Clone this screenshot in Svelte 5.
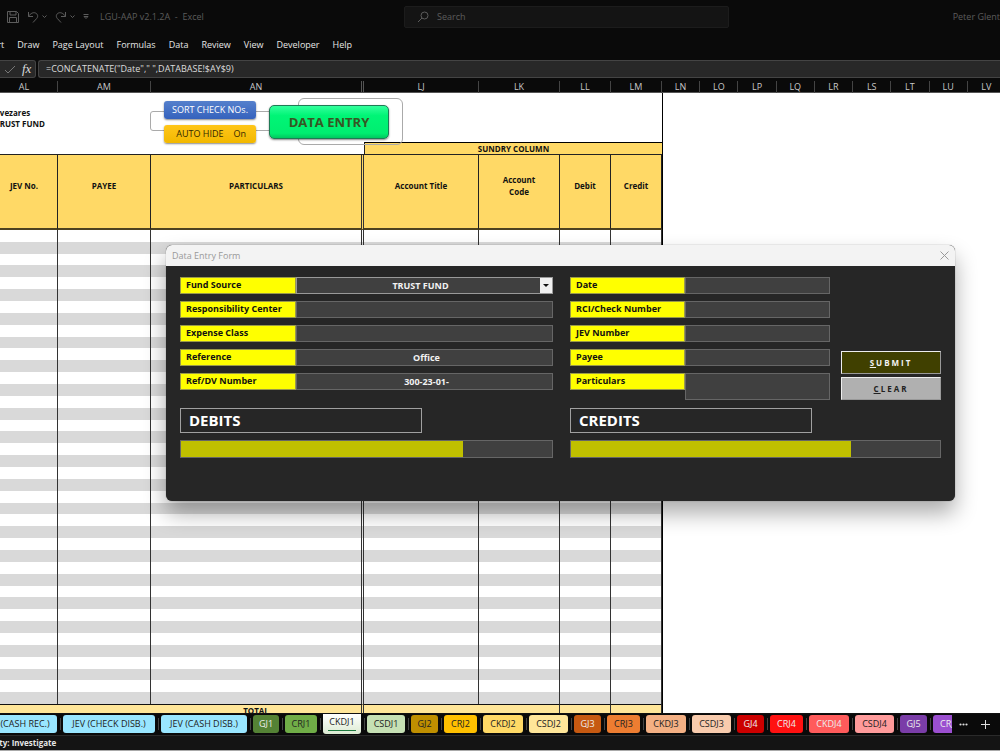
<script>
    const menus = ['Insert', 'Draw', 'Page Layout', 'Formulas', 'Data', 'Review', 'View', 'Developer', 'Help'];
    const columns = ['AL', 'AM', 'AN', 'LJ', 'LK', 'LL', 'LM', 'LN', 'LO', 'LP', 'LQ', 'LR', 'LS', 'LT', 'LU', 'LV'];
    const rows = Array.from({ length: 40 }, (_, i) => i);

    const sheets = [
        { name: 'JEV (CASH REC.)', kind: 'rec', color: 'sky' },
        { name: 'JEV (CHECK DISB.)', kind: 'check', color: 'sky' },
        { name: 'JEV (CASH DISB.)', kind: 'cash', color: 'sky' },
        { name: 'GJ1', kind: 'gj1', color: 'green-a' },
        { name: 'CRJ1', kind: 'crj1', color: 'green-b' },
        { name: 'CKDJ1', kind: 'ckdj1', color: 'current' },
        { name: 'CSDJ1', kind: 'csdj1', color: 'green-d' },
        { name: 'GJ2', kind: 'gj', color: 'gold-a' },
        { name: 'CRJ2', kind: 'crj', color: 'gold-b' },
        { name: 'CKDJ2', kind: 'ckdj', color: 'gold-c' },
        { name: 'CSDJ2', kind: 'csdj', color: 'gold-d' },
        { name: 'GJ3', kind: 'gj', color: 'orange-a' },
        { name: 'CRJ3', kind: 'crj', color: 'orange-b' },
        { name: 'CKDJ3', kind: 'ckdj', color: 'orange-c' },
        { name: 'CSDJ3', kind: 'csdj', color: 'orange-d' },
        { name: 'GJ4', kind: 'gj', color: 'red-a' },
        { name: 'CRJ4', kind: 'crj', color: 'red-b' },
        { name: 'CKDJ4', kind: 'ckdj', color: 'red-c' },
        { name: 'CSDJ4', kind: 'csdj', color: 'red-d' },
        { name: 'GJ5', kind: 'gj', color: 'purple-a' },
        { name: 'CRJ5', kind: 'crj', color: 'purple-b' }
    ];

    const funds = ['TRUST FUND', 'GENERAL FUND'];
    const totals = [{ title: 'DEBITS', filled: 76 }, { title: 'CREDITS', filled: 76 }];

    let formula = '=CONCATENATE("Date"," ",DATABASE!$AY$9)';
    let search = '';
    let showForm = true;
    let autoHide = true;

    let fund = funds[0];
    let left = [
        { id: 'center', label: 'Responsibility Center', value: '' },
        { id: 'expense', label: 'Expense Class', value: '' },
        { id: 'reference', label: 'Reference', value: 'Office' },
        { id: 'refdv', label: 'Ref/DV Number', value: '300-23-01-' }
    ];
    let right = [
        { id: 'date', label: 'Date', value: '' },
        { id: 'rci', label: 'RCI/Check Number', value: '' },
        { id: 'jev', label: 'JEV Number', value: '' },
        { id: 'payee', label: 'Payee', value: '' }
    ];
    let particulars = '';

    function clearForm() {
        left = left.map((f) => ({ ...f, value: '' }));
        right = right.map((f) => ({ ...f, value: '' }));
        particulars = '';
    }
</script>

<div class="app">
    <header class="titlebar">
        <div class="quick">
            <button aria-label="Save">
                <svg width="12" height="12" viewBox="0 0 12 12"><path d="M.5.5h9l2 2v9H.5zM3 .5V4h6V.5M2.5 11.5v-5h7v5" /></svg>
            </button>
            <button aria-label="Undo">
                <svg width="20" height="12" viewBox="0 0 20 12"><path d="M1.500 1v4.500H6M1.500 5.500C3.500 2 7 .8 9.200 2.400c2.400 1.800 1.500 4.200 0 5.600L6 11.500M15.500 4.500l2 2 2-2" /></svg>
            </button>
            <button aria-label="Redo">
                <svg width="20" height="12" viewBox="0 0 20 12"><path d="M10.500 1v4.500H6M10.500 5.500C8.500 2 5 .8 2.800 2.400.4 4.200 1.300 6.600 2.800 8L6 11.500M15.500 4.500l2 2 2-2" /></svg>
            </button>
            <button aria-label="Customize toolbar">
                <svg width="6" height="6" viewBox="0 0 6 6"><path d="M.5.5h5M1 2.500h4l-2 2z" /></svg>
            </button>
        </div>
        <span class="filename">LGU-AAP v2.1.2A&nbsp; -&nbsp; Excel</span>
        <label class="search">
            <svg width="12" height="12" viewBox="0 0 12 12"><circle cx="7.500" cy="4.500" r="3.500" /><path d="M5 7L1 11" /></svg>
            <input aria-label="Search" placeholder="Search" bind:value={search} />
        </label>
        <span class="user">Peter Glent</span>
    </header>

    <nav class="ribbon">
        {#each menus as menu}
            <button>{menu}</button>
        {/each}
    </nav>

    <div class="formula">
        <div class="fx">
            <svg width="12" height="9" viewBox="0 0 12 9"><path d="M1 5l3 3 7-7" /></svg>
            <i>fx</i>
        </div>
        <input aria-label="Formula" bind:value={formula} />
    </div>

    <div class="letters">
        {#each columns as column}
            <span>{column}</span>
        {/each}
    </div>

    <main class="sheet">
        <table>
            <colgroup>
                <col class="c-jev" /><col class="c-payee" /><col class="c-part" /><col class="c-title" /><col class="c-code" /><col class="c-amt" /><col class="c-amt" />
            </colgroup>
            <thead>
                <tr class="top"><td colspan="7"><p>avezares<br />TRUST FUND</p></td></tr>
                <tr class="group"><td colspan="3"></td><th colspan="4">SUNDRY COLUMN</th></tr>
                <tr class="heads">
                    <th>JEV No.</th>
                    <th>PAYEE</th>
                    <th>PARTICULARS</th>
                    <th>Account Title</th>
                    <th>Account<br />Code</th>
                    <th>Debit</th>
                    <th>Credit</th>
                </tr>
            </thead>
            <tbody>
                {#each rows as row (row)}
                    <tr><td></td><td></td><td></td><td></td><td></td><td></td><td></td></tr>
                {/each}
            </tbody>
            <tfoot>
                <tr><td></td><td></td><td>TOTAL</td><td></td><td></td><td></td><td></td></tr>
            </tfoot>
        </table>

        <div class="link small"></div>
        <div class="link big"></div>
        <button class="shape sort">SORT CHECK NOs.</button>
        <button class="shape hide" on:click={() => (autoHide = !autoHide)}>AUTO HIDE <span>{autoHide ? 'On' : 'Off'}</span></button>
        <button class="shape entry" on:click={() => (showForm = true)}>DATA ENTRY</button>

        {#if showForm}
            <div class="dialog" role="dialog" aria-label="Data Entry Form">
                <div class="caption">
                    <span>Data Entry Form</span>
                    <button aria-label="Close" on:click={() => (showForm = false)}>
                        <svg width="9" height="9" viewBox="0 0 9 9"><path d="M.5.5l8 8M8.500.5l-8 8" /></svg>
                    </button>
                </div>
                <form on:submit|preventDefault>
                    <div class="fields first">
                        <div class="field">
                            <label for="fund">Fund Source</label>
                            <div class="combo">
                                <select id="fund" bind:value={fund}>
                                    {#each funds as name}
                                        <option>{name}</option>
                                    {/each}
                                </select>
                                <span class="arrow"></span>
                            </div>
                        </div>
                        {#each left as item (item.id)}
                            <div class="field">
                                <label for={item.id}>{item.label}</label>
                                <input id={item.id} bind:value={item.value} />
                            </div>
                        {/each}
                    </div>
                    <div class="fields second">
                        {#each right as item (item.id)}
                            <div class="field">
                                <label for={item.id}>{item.label}</label>
                                <input id={item.id} bind:value={item.value} />
                            </div>
                        {/each}
                        <div class="field">
                            <label for="particulars">Particulars</label>
                            <textarea id="particulars" bind:value={particulars}></textarea>
                        </div>
                    </div>
                    <div class="actions">
                        <button class="submit" type="submit"><u>S</u>UBMIT</button>
                        <button class="clear" type="button" on:click={clearForm}><u>C</u>LEAR</button>
                    </div>
                </form>
                <div class="totals">
                    {#each totals as total}
                        <section>
                            <h2>{total.title}</h2>
                            <div class="bar"><div style="width: {total.filled}%"></div></div>
                        </section>
                    {/each}
                </div>
            </div>
        {/if}
    </main>

    <nav class="tabs">
        <div class="strip">
            {#each sheets as sheet}
                <button class="tab {sheet.kind} {sheet.color}"><span>{sheet.name}</span></button>
            {/each}
        </div>
        <button class="more" aria-label="More sheets">
            <svg width="9" height="3" viewBox="0 0 9 3"><circle cx="1.500" cy="1.500" r="1.100" /><circle cx="4.500" cy="1.500" r="1.100" /><circle cx="7.500" cy="1.500" r="1.100" /></svg>
        </button>
        <button class="add" aria-label="New sheet">
            <svg width="9" height="9" viewBox="0 0 9 9"><path d="M4.500 0v9M0 4.500h9" /></svg>
        </button>
    </nav>
    <footer>Accessibility: Investigate</footer>
</div>

<style>
    :global(body) {
        background: #0a0a0a;
    }
    .app {
        height: 100vh;
        display: flex;
        flex-direction: column;
        overflow: hidden;
        background: #0a0a0a;
        color: #e6e6e6;
        font: 9px/12px "Open Sans", "Noto Sans", sans-serif;
    }
    .app :global(*) {
        box-sizing: border-box;
    }
    button, input, select, textarea {
        margin: 0;
        padding: 0;
        border: 0;
        border-radius: 0;
        outline: 0;
        background: none;
        color: inherit;
        font: inherit;
    }
    svg {
        display: block;
        fill: none;
        stroke: currentColor;
    }

    /* title bar */
    .titlebar {
        display: grid;
        grid-template-columns: 404px 325px 1fr;
        grid-template-rows: 34px;
        align-items: center;
        flex: none;
        color: #5c5c5c;
    }
    .quick {
        grid-area: 1 / 1;
        display: flex;
        align-items: center;
        gap: 8px;
        padding-left: 7px;
    }
    .filename {
        grid-area: 1 / 1;
        padding-left: 100px;
    }
    .search {
        display: flex;
        align-items: center;
        gap: 8px;
        height: 22px;
        padding-left: 12px;
        border: 1px solid #1c1c1c;
        border-radius: 2px;
        background: #141414;
    }
    .search input {
        flex: 1;
    }
    .search input::placeholder {
        color: #5c5c5c;
    }
    .user {
        justify-self: end;
        white-space: nowrap;
    }

    .ribbon {
        display: flex;
        flex: none;
        gap: 13px;
        height: 26px;
        padding-bottom: 5px;
        margin-left: -20px;
    }

    .formula {
        display: flex;
        flex: none;
        gap: 2px;
        height: 18px;
        color: #dcdcdc;
    }
    .fx {
        display: flex;
        align-items: center;
        gap: 6px;
        width: 36px;
        padding-left: 4px;
        border: 1px solid #444;
        border-left: 0;
        border-radius: 0 3px 3px 0;
        background: #282828;
    }
    .fx svg {
        color: #777;
    }
    .fx i {
        font: italic 13px/14px "Liberation Serif", serif;
    }
    .formula input {
        flex: 1;
        padding-left: 7px;
        border: 1px solid #444;
        border-right: 0;
        border-radius: 3px 0 0 3px;
        background: #282828;
    }

    .letters {
        display: grid;
        grid-template-columns: 58px 93px 213px 115px 81px 51px 51px repeat(9, 1fr);
        flex: none;
        height: 15px;
        padding-top: 3px;
        margin-right: -6px;
        border-bottom: 1px solid #555;
        color: #c8c8c8;
        text-align: center;
    }
    .letters span {
        border-right: 1px solid #444;
    }
    .letters span:first-child {
        padding-right: 9px;
    }
    .letters span:nth-child(3) {
        border-right: 3px double #555;
    }

    /* worksheet */
    .sheet {
        position: relative;
        flex: 1;
        min-height: 0;
        overflow: hidden;
        background: #fff;
        color: #111;
    }
    table {
        width: 662px;
        table-layout: fixed;
        border-collapse: separate;
        border-spacing: 0;
        border-right: 1px solid #000;
    }
    .c-jev { width: 58px; }
    .c-payee { width: 93px; }
    .c-part { width: 213px; }
    .c-title { width: 115px; }
    .c-code { width: 81px; }
    .c-amt { width: 51px; }
    td, th {
        padding: 0;
        line-height: 12px;
    }
    .top td {
        height: 49px;
        vertical-align: top;
    }
    .top p {
        margin: 14px 0 0 -5px;
        line-height: 11px;
        font-size: 8px;
        font-weight: 700;
    }
    .group th, .group td {
        height: 13px;
        line-height: 10px;
        border-bottom: 1px solid #222;
    }
    .group th {
        border-top: 1px solid #000;
        border-left: 1px solid #222;
        background: #ffd966;
    }
    .heads th {
        height: 75px;
        padding-bottom: 12px;
        border-right: 1px solid #222;
        border-bottom: 2px solid #4d4220;
        background: #ffd966;
    }
    .heads th:first-child {
        padding-right: 9px;
    }
    .group th, .heads th, tfoot td {
        font-size: 8px;
        font-weight: 700;
    }
    tbody td {
        height: 12px;
        border-right: 1px solid #333;
    }
    tbody tr:nth-child(7n + 3) td {
        height: 11px;
    }
    tbody tr:nth-child(even) td {
        background: #d9d9d9;
    }
    .heads th:nth-child(3), tbody td:nth-child(3), tfoot td:nth-child(3) {
        border-right: 3px double #333;
    }
    tfoot td {
        height: 14px;
        border-top: 1px solid #111;
        background: #ffe699;
        text-align: center;
        vertical-align: top;
    }
    tfoot td:nth-child(n + 5) {
        border-right: 1px solid #333;
    }

    /* drawing shapes floating on the sheet */
    .link, .shape {
        position: absolute;
    }
    .link {
        border: 1px solid #aaa;
    }
    .link.small {
        left: 150px;
        top: 18px;
        width: 130px;
        height: 20px;
        border-radius: 3px;
    }
    .link.big {
        left: 298px;
        top: 5px;
        width: 105px;
        height: 47px;
        border-radius: 6px;
    }
    .shape {
        border-radius: 3px;
        box-shadow: 0 1px 2px #0007;
    }
    .sort, .hide {
        left: 164px;
        width: 92px;
        height: 18px;
    }
    .sort {
        top: 8px;
        background: linear-gradient(#5580cc, #3562bd);
        color: #fff;
    }
    .hide {
        display: flex;
        align-items: center;
        justify-content: flex-end;
        gap: 10px;
        top: 32px;
        padding-right: 10px;
        background: linear-gradient(#ffc61a, #f2b800);
        color: #332800;
    }
    .entry {
        left: 269px;
        top: 12px;
        width: 120px;
        height: 34px;
        border: 1px solid #1f7a55;
        border-radius: 5px;
        background: linear-gradient(#33ff9c, #00f576 30%, #00ee70 85%, #00c95f);
        color: #375623;
        font-size: 13px;
        font-weight: 700;
    }

    /* data entry window */
    .dialog {
        position: absolute;
        left: 166px;
        top: 152px;
        width: 789px;
        height: 256px;
        overflow: hidden;
        border-radius: 6px;
        background: #262626;
        box-shadow: 0 0 1px #0009, 0 12px 22px #0005;
        color: #f2f2f2;
        font-weight: 700;
    }
    .caption {
        display: flex;
        align-items: center;
        justify-content: space-between;
        height: 21px;
        padding: 0 6px;
        background: #f3f3f3;
        color: #999;
        font-weight: 400;
    }
    form {
        display: flex;
        padding: 11px 14px 0;
    }
    .fields {
        display: flex;
        flex-direction: column;
        gap: 7px;
    }
    .first {
        width: 373px;
        margin-right: 17px;
    }
    .second {
        width: 260px;
        margin-right: 11px;
    }
    .field {
        display: flex;
        align-items: flex-start;
    }
    .field label {
        flex: none;
        width: 116px;
        height: 17px;
        padding-left: 5px;
        border: 1px solid #9a9a4a;
        background: #ff0;
        color: #111;
        line-height: 14px;
    }
    .second label {
        width: 115px;
    }
    .field input, .field textarea, .combo {
        flex: 1;
        min-width: 0;
        height: 17px;
        padding-left: 4px;
        border: 1px solid #666;
        background: #404040;
        text-align: center;
    }
    .field textarea {
        display: block;
        height: 27px;
        resize: none;
    }
    .combo {
        display: flex;
        border-color: #999;
    }
    .combo select {
        flex: 1;
        appearance: none;
        text-align: center;
        text-align-last: center;
        line-height: 14px;
    }
    .arrow {
        display: flex;
        align-items: center;
        justify-content: center;
        width: 12px;
        background: #f0f0f0;
        pointer-events: none;
    }
    .arrow::after {
        content: "";
        border: 3px solid transparent;
        border-top-color: #111;
        border-bottom: 0;
    }
    .actions {
        display: flex;
        flex-direction: column;
        justify-content: flex-end;
        gap: 3px;
        flex: 1;
    }
    .actions button {
        height: 23px;
        border: 1px solid #999;
        border-top-color: #eee;
        border-left-color: #eee;
        letter-spacing: 2px;
        font-size: 8px;
        font-weight: 700;
    }
    .submit {
        background: #404000;
    }
    .clear {
        background: #b0b0b0;
        color: #222;
    }
    .totals {
        display: grid;
        grid-template-columns: 373px 1fr;
        gap: 17px;
        padding: 8px 14px 0;
    }
    h2 {
        width: 242px;
        height: 25px;
        margin: 0 0 7px;
        padding-left: 8px;
        border: 1px solid #a0a0a0;
        color: #fff;
        font-size: 15px;
        line-height: 22px;
    }
    .bar {
        height: 18px;
        border: 1px solid #666;
        background: #404040;
    }
    .bar div {
        height: 100%;
        background: #c0c000;
    }

    /* sheet tabs */
    .tabs {
        display: flex;
        flex: none;
        align-items: center;
        height: 22px;
        padding-right: 4px;
        border-top: 1px solid #111;
        background: #0a0a0a;
    }
    .strip {
        display: flex;
        align-items: center;
        width: calc(100% - 44px);
        height: 100%;
        overflow: hidden;
    }
    .tab {
        display: flex;
        flex: none;
        align-items: center;
        justify-content: center;
        height: 22px;
        padding: 1px 0 2px;
        color: #222;
        white-space: nowrap;
    }
    .tab::after {
        content: "";
        flex: none;
        width: 1px;
        height: 12px;
        margin: 0 2px 0 3px;
        background: #444;
    }
    .tab span {
        flex: 1;
        height: 18px;
        line-height: 17px;
        border-radius: 3px;
    }
    .rec { width: 85px; margin-left: -22px; }
    .check { width: 98px; }
    .cash { width: 92px; }
    .gj1 { width: 32px; }
    .crj1 { width: 38px; }
    .ckdj1 { width: 44px; }
    .csdj1 { width: 44px; }
    .gj { width: 33px; }
    .crj { width: 39px; }
    .ckdj { width: 46px; }
    .csdj { width: 45px; }
    .sky span { background: #99e6ff; }
    .green-a span { background: #548235; color: #eee; }
    .green-b span { background: #70ad47; }
    .green-d span { background: #c6e0b4; }
    .gold-a span { background: #bf8f00; }
    .gold-b span { background: #ffc000; }
    .gold-c span { background: #ffd966; }
    .gold-d span { background: #ffe699; }
    .orange-a span { background: #c65911; color: #eee; }
    .orange-b span { background: #ed7d31; }
    .orange-c span { background: #f4b084; }
    .orange-d span { background: #f8cbad; }
    .red-a span { background: #c00; color: #eee; }
    .red-b span { background: #f11; color: #eee; }
    .red-c span { background: #ff5b5b; color: #eee; }
    .red-d span { background: #ff9b9b; }
    .purple-a span { background: #7a3da8; color: #eee; }
    .purple-b span { background: #9b4fd0; color: #eee; }
    .current {
        padding: 0 0 2px;
    }
    .current span {
        height: 20px;
        padding: 0 5px;
        border-radius: 0 0 3px 3px;
        background: linear-gradient(#fff, #dcebd2);
        line-height: 16px;
    }
    .current span::after {
        content: "";
        display: block;
        height: 1px;
        background: #1f7a3f;
    }
    .more, .add {
        flex: 1;
        display: flex;
        justify-content: center;
        color: #ddd;
    }
    .more svg {
        fill: currentColor;
        stroke: none;
    }
    footer {
        flex: none;
        height: 16px;
        padding-top: 1px;
        text-indent: -42px;
        border-top: 1px solid #2a2a2a;
        border-bottom: 1px solid #aaa;
        background: #141414;
        font-size: 8px;
        font-weight: 700;
    }
</style>
